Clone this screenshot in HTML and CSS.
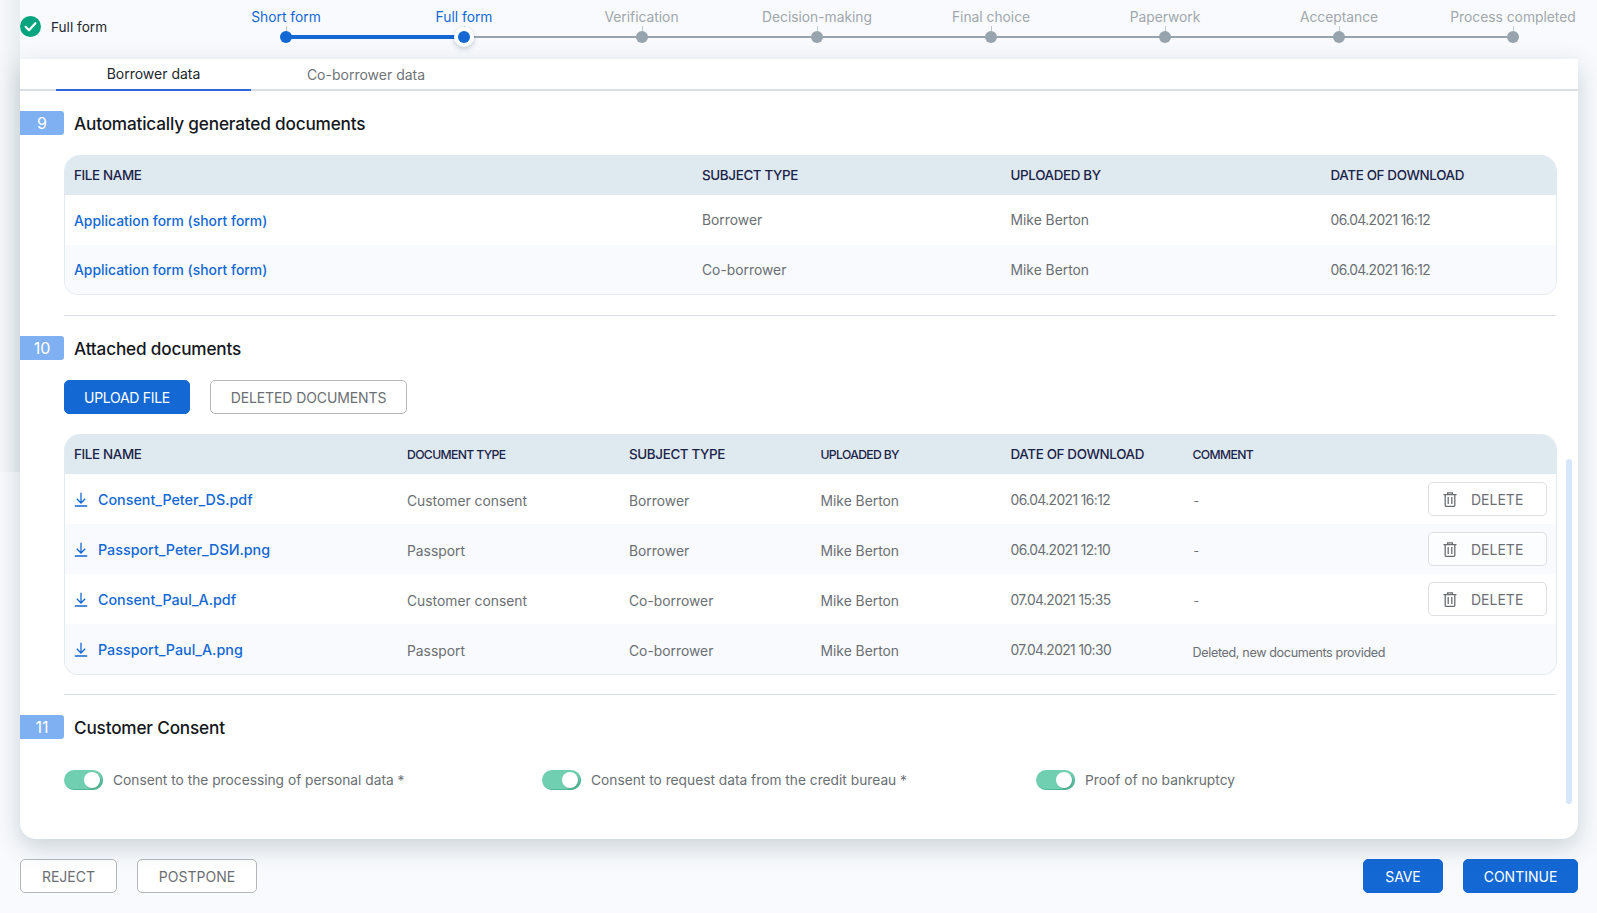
FILE: index.html
```html
<!DOCTYPE html>
<html lang="en">
<head>
<meta charset="utf-8">
<title>Full form</title>
<link rel="stylesheet" href="styles.css">
</head>
<body>
<div class="side-shade"></div>
<header class="top">
  <div class="brand">
    <svg class="brand-check" viewBox="0 0 21 21" width="21" height="21"><circle cx="10.5" cy="10.5" r="10.5" fill="#07a57f"/><path d="M5.6 10.8l3.4 3.4 6.4-7" fill="none" stroke="#fff" stroke-width="2.2" stroke-linecap="round" stroke-linejoin="round"/></svg>
    <span>Full form</span>
  </div>
  <ol class="steps">
    <li class="step done w178"><span class="step-label">Short form</span><i class="dot"></i></li>
    <li class="step current w178"><span class="step-label">Full form</span><i class="dot"></i></li>
    <li class="step w177"><span class="step-label">Verification</span><i class="dot"></i></li>
    <li class="step w174"><span class="step-label">Decision-making</span><i class="dot"></i></li>
    <li class="step w174"><span class="step-label">Final choice</span><i class="dot"></i></li>
    <li class="step w174"><span class="step-label">Paperwork</span><i class="dot"></i></li>
    <li class="step w174"><span class="step-label">Acceptance</span><i class="dot"></i></li>
    <li class="step w174 last"><span class="step-label">Process completed</span><i class="dot"></i></li>
  </ol>
</header>

<main class="card">
  <nav class="tabs">
    <a class="tab active">Borrower data</a>
    <a class="tab">Co-borrower data</a>
  </nav>

  <section class="section">
    <h2 class="head"><span class="badge">9</span>Automatically generated documents</h2>
    <div class="table t-auto">
      <div class="row th"><span>FILE NAME</span><span>SUBJECT TYPE</span><span>UPLOADED BY</span><span>DATE OF DOWNLOAD</span></div>
      <div class="row"><a class="link">Application form (short form)</a><span>Borrower</span><span>Mike Berton</span><span class="date">06.04.2021 16:12</span></div>
      <div class="row alt"><a class="link">Application form (short form)</a><span>Co-borrower</span><span>Mike Berton</span><span class="date">06.04.2021 16:12</span></div>
    </div>
  </section>

  <section class="section ruled">
    <h2 class="head"><span class="badge">10</span>Attached documents</h2>
    <div class="actions">
      <button class="btn primary upload">UPLOAD FILE</button>
      <button class="btn outline deleted">DELETED DOCUMENTS</button>
    </div>
    <div class="table t-att">
      <div class="row th"><span>FILE NAME</span><span class="small">DOCUMENT TYPE</span><span>SUBJECT TYPE</span><span class="small">UPLOADED BY</span><span>DATE OF DOWNLOAD</span><span class="small">COMMENT</span><span></span></div>
      <div class="row">
        <a class="link file"><svg class="ico" viewBox="0 0 14 15" width="14" height="15"><path d="M7 .8v10M2.8 6.8L7 11l4.2-4.2M.8 14h12.4" fill="none" stroke="#1368d4" stroke-width="1.3"/></svg>Consent_Peter_DS.pdf</a>
        <span>Customer consent</span><span>Borrower</span><span>Mike Berton</span><span class="date">06.04.2021 16:12</span><span class="dash">-</span>
        <button class="btn del"><svg class="ico" viewBox="0 0 14 15" width="14" height="15"><path d="M.5 2.6h13M4.6 2.4V.8h4.8v1.6M2.2 2.8v10.4c0 .7.5 1.2 1.2 1.2h7.2c.7 0 1.2-.5 1.2-1.2V2.8M5.2 5v7M8.8 5v7" fill="none" stroke="#6a6d70" stroke-width="1.3"/></svg>DELETE</button>
      </div>
      <div class="row alt">
        <a class="link file"><svg class="ico" viewBox="0 0 14 15" width="14" height="15"><path d="M7 .8v10M2.8 6.8L7 11l4.2-4.2M.8 14h12.4" fill="none" stroke="#1368d4" stroke-width="1.3"/></svg>Passport_Peter_DSИ.png</a>
        <span>Passport</span><span>Borrower</span><span>Mike Berton</span><span class="date">06.04.2021 12:10</span><span class="dash">-</span>
        <button class="btn del"><svg class="ico" viewBox="0 0 14 15" width="14" height="15"><path d="M.5 2.6h13M4.6 2.4V.8h4.8v1.6M2.2 2.8v10.4c0 .7.5 1.2 1.2 1.2h7.2c.7 0 1.2-.5 1.2-1.2V2.8M5.2 5v7M8.8 5v7" fill="none" stroke="#6a6d70" stroke-width="1.3"/></svg>DELETE</button>
      </div>
      <div class="row">
        <a class="link file"><svg class="ico" viewBox="0 0 14 15" width="14" height="15"><path d="M7 .8v10M2.8 6.8L7 11l4.2-4.2M.8 14h12.4" fill="none" stroke="#1368d4" stroke-width="1.3"/></svg>Consent_Paul_A.pdf</a>
        <span>Customer consent</span><span>Co-borrower</span><span>Mike Berton</span><span class="date">07.04.2021 15:35</span><span class="dash">-</span>
        <button class="btn del"><svg class="ico" viewBox="0 0 14 15" width="14" height="15"><path d="M.5 2.6h13M4.6 2.4V.8h4.8v1.6M2.2 2.8v10.4c0 .7.5 1.2 1.2 1.2h7.2c.7 0 1.2-.5 1.2-1.2V2.8M5.2 5v7M8.8 5v7" fill="none" stroke="#6a6d70" stroke-width="1.3"/></svg>DELETE</button>
      </div>
      <div class="row alt">
        <a class="link file"><svg class="ico" viewBox="0 0 14 15" width="14" height="15"><path d="M7 .8v10M2.8 6.8L7 11l4.2-4.2M.8 14h12.4" fill="none" stroke="#1368d4" stroke-width="1.3"/></svg>Passport_Paul_A.png</a>
        <span>Passport</span><span>Co-borrower</span><span>Mike Berton</span><span class="date">07.04.2021 10:30</span><span class="comment">Deleted, new documents provided</span><span></span>
      </div>
    </div>
  </section>

  <section class="section ruled last-section">
    <h2 class="head"><span class="badge">11</span>Customer Consent</h2>
    <div class="consents">
      <label class="consent c1"><i class="toggle"></i>Consent to the processing of personal data *</label>
      <label class="consent c2"><i class="toggle"></i>Consent to request data from the credit bureau *</label>
      <label class="consent"><i class="toggle"></i>Proof of no bankruptcy</label>
    </div>
  </section>
  <div class="scrollbar"></div>
</main>

<footer class="bottom">
  <div class="group">
    <button class="btn outline reject">REJECT</button>
    <button class="btn outline postpone">POSTPONE</button>
  </div>
  <div class="group">
    <button class="btn primary save">SAVE</button>
    <button class="btn primary continue">CONTINUE</button>
  </div>
</footer>
</body>
</html>
```
FILE: styles.css
```css
* { box-sizing: border-box; }
html, body { height: 100%; }
body {
  position: relative;
  margin: 0;
  width: 1597px;
  height: 913px;
  padding: 0 19px 0 20px;
  overflow: hidden;
  background: #f8fafd;
  font-family: Inter, "Noto Sans", sans-serif;
  font-size: 13.85px;
  color: #6b6f74;
  display: flex;
  flex-direction: column;
}

/* shadow of the panel that lies behind, on the left edge */
.side-shade {
  position: absolute;
  left: 0;
  top: 0;
  width: 20px;
  height: 472px;
  background: linear-gradient(to right, #f6f8fb, #e9edf0);
}

/* top stepper */
.top { position: relative; display: flex; height: 59px; }
.brand {
  width: 177px;
  flex: none;
  display: flex;
  align-items: center;
  gap: 10px;
  height: 21px;
  margin-top: 16px;
  font-size: 13.6px;
  color: #22272e;
}
.steps { display: flex; list-style: none; margin: 0; padding: 0; }
.step {
  position: relative;
  display: flex;
  flex-direction: column;
  align-items: center;
  flex: none;
  color: #a1a7ac;
}
.w178 { width: 178px; }
.w177 { width: 177px; }
.w174 { width: 174px; }
.step-label { margin-top: 9px; line-height: 17px; height: 17px; font-size: 13.8px; white-space: nowrap; }
.step::after {
  content: "";
  position: absolute;
  left: 50%;
  top: 36px;
  width: 100%;
  height: 2px;
  background: #98a4ad;
}
.step::before {
  content: "";
  position: absolute;
  left: 50%;
  top: 26px;
  width: 1px;
  height: 6px;
  background: #c3c9ce;
}
.step.last::after { display: none; }
.dot {
  position: relative;
  z-index: 1;
  width: 12px;
  height: 12px;
  margin-top: 5px;
  border-radius: 50%;
  background: #98a4ad;
}
.step.done, .step.current { color: #1368d4; }
.step.done::after { background: #1368d4; height: 4px; top: 35px; }
.step.done .dot { background: #1368d4; }
.step.current .dot {
  background: #1368d4;
  box-shadow: 0 0 0 4px #fff, 0 2px 5px 4px rgba(40, 60, 100, .25);
}

/* card */
.card {
  position: relative;
  height: 780px;
  flex: none;
  background: #fff;
  border-radius: 0 0 16px 16px;
  box-shadow: 0 8px 24px rgba(70, 95, 110, .26);
}
.tabs { display: flex; height: 32px; padding-left: 36px; border-bottom: 2px solid #d9dee5; font-size: 14px; }
.tab {
  height: 32px;
  display: flex;
  align-items: center;
  justify-content: center;
  padding-bottom: 1px;
  color: #6f7478;
}
.tab:first-child { width: 195px; margin-right: 40px; color: #23282e; border-bottom: 2px solid #2f68d8; }
.tab:last-child { width: 150px; }

.section { margin: 0 22px 0 44px; padding-top: 20px; }
.section.ruled { margin-top: 20px; border-top: 1.5px solid #d9dee5; }
.section.last-section { margin-top: 19px; }
.head {
  display: flex;
  align-items: center;
  height: 24px;
  margin: 0 0 20px -44px;
  font-size: 17.2px;
  letter-spacing: -.18px;
  font-weight: 500;
  color: #14181d;
}
.badge {
  width: 44px;
  height: 24px;
  margin-right: 10px;
  display: flex;
  align-items: center;
  justify-content: center;
  font-size: 16px;
  font-weight: 400;
  letter-spacing: 0;
  color: #fff;
  background: #7fb1f2;
  border-radius: 0 3px 3px 0;
}

/* tables */
.table {
  margin-right: -1px;
  border: 1px solid #e3eaf1;
  border-top: 0;
  border-radius: 16px 16px 14px 14px;
  overflow: hidden;
}
.row { display: grid; align-items: center; height: 50px; padding-left: 9px; }
.row.th {
  height: 40px;
  margin: 0 -1px;
  padding-top: 0;
  padding-left: 10px;
  background: #dfe9f0;
  color: #1a2348;
  font-weight: 500;
  font-size: 13.4px;
  letter-spacing: -.35px;
}
.row.alt { background: #f8fafd; }
.t-auto .row.alt { height: 49px; }
.t-att .row { padding-top: 3px; }
.t-att .row.th { padding-top: 0; }
.t-auto .row { grid-template-columns: 628px 308.5px 320px 1fr; }
.t-att .row { grid-template-columns: 333px 222px 191.5px 190px 182px 225px 1fr; }
.small { font-size: 12.2px; letter-spacing: -.65px; }
.link { color: #1368d4; font-weight: 500; font-size: 13.9px; }
.t-auto .link { margin-top: 1px; }
.file { display: flex; align-items: center; gap: 10px; margin-top: -2px; font-size: 14.3px; }
.date { letter-spacing: -.6px; }
.t-att .date { margin-top: -2px; }
.ico { flex: none; }
.dash { font-size: 12px; padding-left: 1px; }
.comment { font-size: 12.6px; letter-spacing: -.36px; white-space: nowrap; margin-top: 3px; }

/* buttons */
.actions { display: flex; gap: 20px; margin-bottom: 20px; }
.btn {
  height: 34px;
  padding: 0;
  font: inherit;
  font-size: 14px;
  border-radius: 5px;
  cursor: pointer;
}
.primary { background: #1368d4; border: 1px solid #1368d4; color: #fff; }
.outline { background: #fff; border: 1px solid #b4b6b9; color: #6b6f74; }
.upload { width: 126px; letter-spacing: -.3px; }
.deleted { width: 197px; letter-spacing: -.1px; }
.reject { width: 97px; }
.postpone { width: 120px; }
.save { width: 80px; letter-spacing: -.1px; }
.continue { width: 115px; }
.del {
  width: 119px;
  margin-left: auto;
  margin-right: 9px;
  margin-top: -3px;
  display: flex;
  align-items: center;
  gap: 14px;
  padding-left: 14px;
  background: #fff;
  border: 1px solid #dcdfe3;
  color: #6b6f74;
}
.row.alt .del { background: #fcfdfe; }

/* consents */
.consents { display: flex; margin-top: 31px; font-size: 13.75px; }
.consent { display: flex; align-items: center; gap: 10px; height: 20px; }
.c1 { width: 478px; }
.c2 { width: 494px; }
.toggle {
  position: relative;
  flex: none;
  width: 39px;
  height: 20px;
  border-radius: 10px;
  background: #70cfb1;
  box-shadow: inset -1px -1px 0 #4fb596;
}
.toggle::after {
  content: "";
  position: absolute;
  right: 3px;
  top: 2px;
  width: 16px;
  height: 16px;
  border-radius: 50%;
  background: #fff;
  box-shadow: 1px 1px 1px #4fa98c;
}

.scrollbar {
  position: absolute;
  left: 1546px;
  top: 400px;
  width: 6px;
  height: 345px;
  border-radius: 3px;
  background: #d6e6fb;
}

/* footer */
.bottom { display: flex; justify-content: space-between; margin-top: 20px; }
.group { display: flex; gap: 20px; }
```
